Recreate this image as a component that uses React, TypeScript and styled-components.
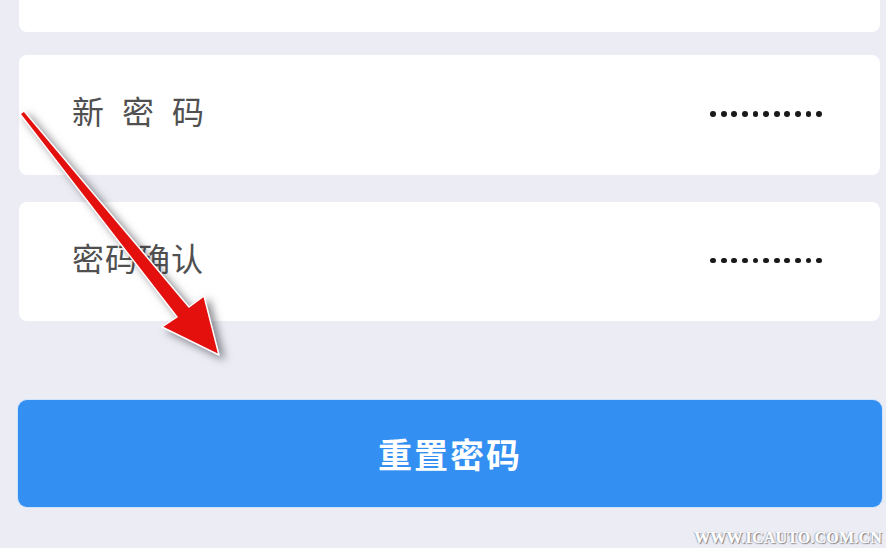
import React from 'react';
import styled, { createGlobalStyle } from 'styled-components';

const GlobalStyle = createGlobalStyle`
  html, body {
    margin: 0;
    padding: 0;
    background: #ececf4;
  }
  #root {
    width: 886px;
    height: 548px;
    overflow: hidden;
  }
`;

const Screen = styled.div`
  position: relative;
  width: 886px;
  height: 548px;
  box-sizing: border-box;
  padding: 0 4px 0 19px;
  background: #ececf4;
  display: flex;
  flex-direction: column;
  font-family: 'Noto Sans CJK SC', 'Noto Sans', sans-serif;
`;

const Card = styled.div<{ $height: number; $gap: number; $cut?: boolean }>`
  height: ${(p) => p.$height}px;
  margin-top: ${(p) => p.$gap}px;
  margin-right: 2px;
  background: #ffffff;
  border-radius: ${(p) => (p.$cut ? '0 0 8px 8px' : '8px')};
  display: flex;
  align-items: center;
  justify-content: space-between;
  padding: 0 58px 0 53px;
`;

const Label = styled.span<{ $spacing: number }>`
  font-size: 32px;
  font-weight: 400;
  color: #505050;
  letter-spacing: ${(p) => p.$spacing}px;
  line-height: 1;
  padding-bottom: 10px;
`;

const Dots = styled.div`
  display: flex;
  gap: 4.8px;
  padding-bottom: 2px;
`;

const Dot = styled.span`
  width: 5.8px;
  height: 5.8px;
  border-radius: 50%;
  background: #1a1a1a;
`;

const ResetButton = styled.button`
  margin-top: 79px;
  margin-left: -1px;
  height: 107px;
  border: none;
  border-radius: 9px;
  background: #348ff2;
  color: #ffffff;
  font-family: 'Noto Sans CJK SC', 'Noto Sans', sans-serif;
  font-size: 34px;
  font-weight: 700;
  letter-spacing: 2px;
  box-shadow: 0 0 0 1px #cfe3fa;
`;

const Watermark = styled.div`
  position: absolute;
  right: 4px;
  bottom: 1px;
  font-family: 'Liberation Serif', serif;
  font-weight: 700;
  font-size: 16px;
  letter-spacing: 0.2px;
  color: #ffffff;
  -webkit-text-stroke: 0.4px #ffffff;
  text-shadow: 0 0 1px #7a7a84, 1px 1px 1px #6a6a74, -1px 0 1px #b0b0b8;
`;

const ArrowLayer = styled.svg`
  position: absolute;
  left: 0;
  top: 0;
  pointer-events: none;
  filter: drop-shadow(5px 4px 4px rgba(40, 40, 50, 0.55));
`;

const PasswordDots = ({ count }: { count: number }) => (
  <Dots aria-label="password">
    {Array.from({ length: count }).map((_, i) => (
      <Dot key={i} />
    ))}
  </Dots>
);

const App = () => {
  return (
    <>
      <GlobalStyle />
      <Screen>
        <Card $height={32} $gap={0} $cut />
        <Card $height={120} $gap={23}>
          <Label $spacing={18}>新密码</Label>
          <PasswordDots count={11} />
        </Card>
        <Card $height={119} $gap={27}>
          <Label $spacing={1}>密码确认</Label>
          <PasswordDots count={11} />
        </Card>
        <ResetButton>重置密码</ResetButton>
        <Watermark>WWW.ICAUTO.COM.CN</Watermark>
        <ArrowLayer width="260" height="380" viewBox="0 0 260 380">
          <polygon
            points="20,114 177,317 162,327 219,355 204,296 189,307 24,111"
            fill="#e3100e"
            stroke="#ffffff"
            strokeWidth="1.5"
            strokeLinejoin="round"
          />
        </ArrowLayer>
      </Screen>
    </>
  );
};

export default App;
